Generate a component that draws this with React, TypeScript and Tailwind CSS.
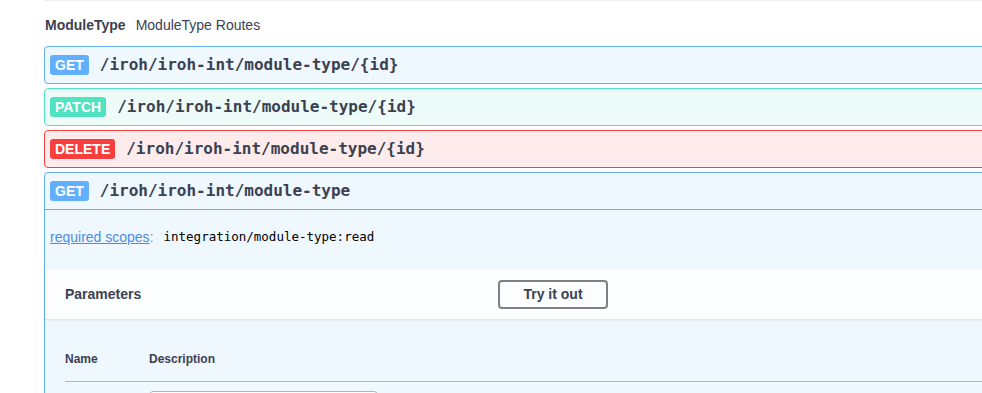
const ops = [
  { method: "GET", path: "/iroh/iroh-int/module-type/{id}", badge: "bg-[#61affe]", box: "border-[#61affe] bg-[#eff7ff]" },
  { method: "PATCH", path: "/iroh/iroh-int/module-type/{id}", badge: "bg-[#50e3c2]", box: "border-[#50e3c2] bg-[#edfcf9]" },
  { method: "DELETE", path: "/iroh/iroh-int/module-type/{id}", badge: "bg-[#f93e3e]", box: "border-[#f93e3e] bg-[#feecec]" },
];

function Summary({ method, path, badge }: { method: string; path: string; badge: string }) {
  return (
    <div className="flex items-center h-[36px] px-[5px]">
      <span className={`${badge} text-white text-sm font-bold h-[20px] leading-[20px] px-[5px] rounded-[3px]`}>
        {method}
      </span>
      <span className="ml-[11px] text-[16px] font-bold text-[#3b4151]"
        style={{ fontFamily: '"DejaVu Sans Mono", monospace' }}>
        {path}
      </span>
    </div>
  );
}

export default function App() {
  return (
    <div className="w-[982px] h-[393px] overflow-hidden bg-white text-[#3b4151]"
      style={{ fontFamily: '"Liberation Sans", Arial, sans-serif' }}>
      <div className="w-[1500px] pl-[44px]">
        <div className="h-[46px] border-t border-[#eceef1] flex items-center pl-[1px] pt-[3px]">
          <span className="text-sm font-bold">ModuleType</span>
          <span className="text-sm ml-[10px]">ModuleType Routes</span>
        </div>

        {ops.map(op => (
          <div key={op.method} className={`h-[38px] mb-[4px] border rounded-[4px] ${op.box}`}>
            <Summary {...op} />
          </div>
        ))}

        <div className="border border-[#61affe] bg-[#eff7ff] rounded-t-[4px] h-[260px]">
          <div className="border-b border-[#61affe]">
            <Summary method="GET" path="/iroh/iroh-int/module-type" badge="bg-[#61affe]" />
          </div>

          <div className="pt-[17px] pb-[22px] pl-[5px] leading-[20px] flex items-center">
            <a href="#" className="text-sm text-[#4990e2] underline">required scopes</a>
            <span className="text-sm text-[#8a9099]">:</span>
            <span className="ml-[10px] text-[12.5px] text-black"
              style={{ fontFamily: '"DejaVu Sans Mono", monospace' }}>
              integration/module-type:read
            </span>
          </div>

          <div className="h-[50px] bg-[#fcfdff] shadow-[0_1px_2px_rgba(0,0,0,0.1)] flex items-center px-[20px]">
            <h4 className="w-[433px] text-sm font-bold">Parameters</h4>
            <button className="w-[110px] h-[29px] border-2 border-[#808080] rounded-[4px] text-sm font-bold text-[#3b4151] bg-transparent">
              Try it out
            </button>
          </div>

          <div className="px-[20px] pt-[33px]">
            <div className="flex border-b border-[#b3bac5] pb-[14px] text-xs font-bold leading-[15px]">
              <span className="w-[84px]">Name</span>
              <span>Description</span>
            </div>
            <div className="flex pt-[9px]">
              <span className="w-[84px] text-[16px] leading-[20px] pt-[3px]">sort_by</span>
              <div className="w-[229px] h-[35px] border border-[#b5b5b5] rounded-[4px] bg-white" />
            </div>
          </div>
        </div>
      </div>
    </div>
  );
}
